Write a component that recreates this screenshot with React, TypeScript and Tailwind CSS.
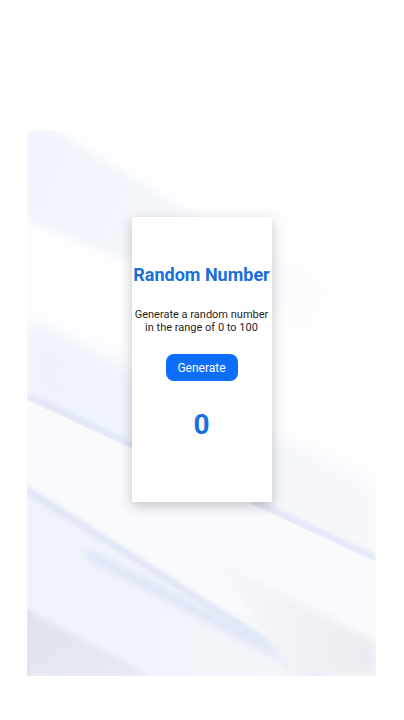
import React, { useState } from "react";

function Backdrop() {
  return (
    <svg
      className="absolute inset-0 h-full w-full"
      viewBox="0 0 349 546"
      preserveAspectRatio="none"
    >
      <defs>
        <filter id="b1" x="-20%" y="-20%" width="140%" height="140%">
          <feGaussianBlur stdDeviation="8" />
        </filter>
        <filter id="b2" x="-20%" y="-20%" width="140%" height="140%">
          <feGaussianBlur stdDeviation="2.5" />
        </filter>
        <filter id="b3" x="-20%" y="-20%" width="140%" height="140%">
          <feGaussianBlur stdDeviation="4" />
        </filter>
        <linearGradient id="gTop" x1="0" y1="0" x2="1" y2="0.3">
          <stop offset="0" stopColor="#eef2fb" />
          <stop offset="0.6" stopColor="#f7f9fd" />
          <stop offset="1" stopColor="#fcfdfe" />
        </linearGradient>
        <linearGradient id="gMid" x1="0" y1="0" x2="1" y2="0">
          <stop offset="0" stopColor="#edf1fa" />
          <stop offset="1" stopColor="#f6f8fb" />
        </linearGradient>
        <linearGradient id="gLow" x1="0" y1="0" x2="1" y2="0">
          <stop offset="0" stopColor="#eef2fa" />
          <stop offset="1" stopColor="#f4f6fa" />
        </linearGradient>
        <linearGradient id="gRight" x1="0" y1="0" x2="1" y2="0">
          <stop offset="0" stopColor="#f6f7fa" />
          <stop offset="1" stopColor="#eaecf1" />
        </linearGradient>
        <linearGradient id="gGray" x1="0" y1="0" x2="1" y2="1">
          <stop offset="0" stopColor="#dfe3ec" />
          <stop offset="1" stopColor="#e7eaf1" />
        </linearGradient>
      </defs>
      <rect width="349" height="546" fill="#fcfdfe" />
      {/* top-left faint band */}
      <polygon points="0,0 25,0 200,105 349,175 349,230 0,90" fill="url(#gTop)" filter="url(#b3)" />
      {/* middle band */}
      <polygon points="0,190 349,355 349,430 0,267" fill="url(#gMid)" filter="url(#b1)" />
      <polygon points="0,262 349,425 349,432 0,270" fill="#dde5f6" filter="url(#b2)" />
      {/* lower white/blue band */}
      <polygon points="0,270 349,432 349,546 0,546" fill="#f9fafd" />
      <polygon points="0,360 293,546 0,546" fill="url(#gLow)" filter="url(#b2)" />
      <polygon points="0,356 293,542 293,548 0,364" fill="#dbe3f5" filter="url(#b2)" />
      {/* streak */}
      <polygon points="60,420 300,544 290,548 60,428" fill="#d7e1f6" filter="url(#b3)" />
      {/* right gray band */}
      <polygon points="190,430 349,512 349,546 262,546" fill="url(#gRight)" filter="url(#b3)" />
      {/* bottom-left gray */}
      <polygon points="0,480 125,546 0,546" fill="url(#gGray)" filter="url(#b2)" />
      <rect x="0" y="480" width="4" height="66" fill="#e0e4ec" />
    </svg>
  );
}

export default function App() {
  const [value, setValue] = useState(0);
  return (
    <div
      className="flex h-[720px] w-[404px] items-start bg-white pt-[130px] pl-[27px]"
      style={{ fontFamily: "Roboto, 'Noto Sans', sans-serif" }}
    >
      <div className="relative flex h-[546px] w-[349px] justify-center overflow-hidden pt-[87px]">
        <Backdrop />
        <div className="relative flex h-[285px] w-[140px] flex-col items-center bg-white pt-[46px] shadow-[0_4px_12px_rgba(0,0,0,0.22)]">
          <h1 className="text-[18px] font-bold leading-[24px] whitespace-nowrap text-[#1a6fdc]">
            Random Number
          </h1>
          <p className="mt-[21px] text-center text-[11px] leading-[13px] text-[#1f1f1f]">
            Generate a random number
            <br />
            in the range of 0 to 100
          </p>
          <button
            onClick={() => setValue(Math.floor(Math.random() * 101))}
            className="mt-[20px] flex h-[27px] w-[72px] items-center justify-center rounded-[8px] bg-[#0d6efd] text-[12px] text-white"
          >
            Generate
          </button>
          <div className="mt-[27px] text-[28px] font-bold leading-[34px] text-[#1a6fdc]">
            {value}
          </div>
        </div>
      </div>
    </div>
  );
}
